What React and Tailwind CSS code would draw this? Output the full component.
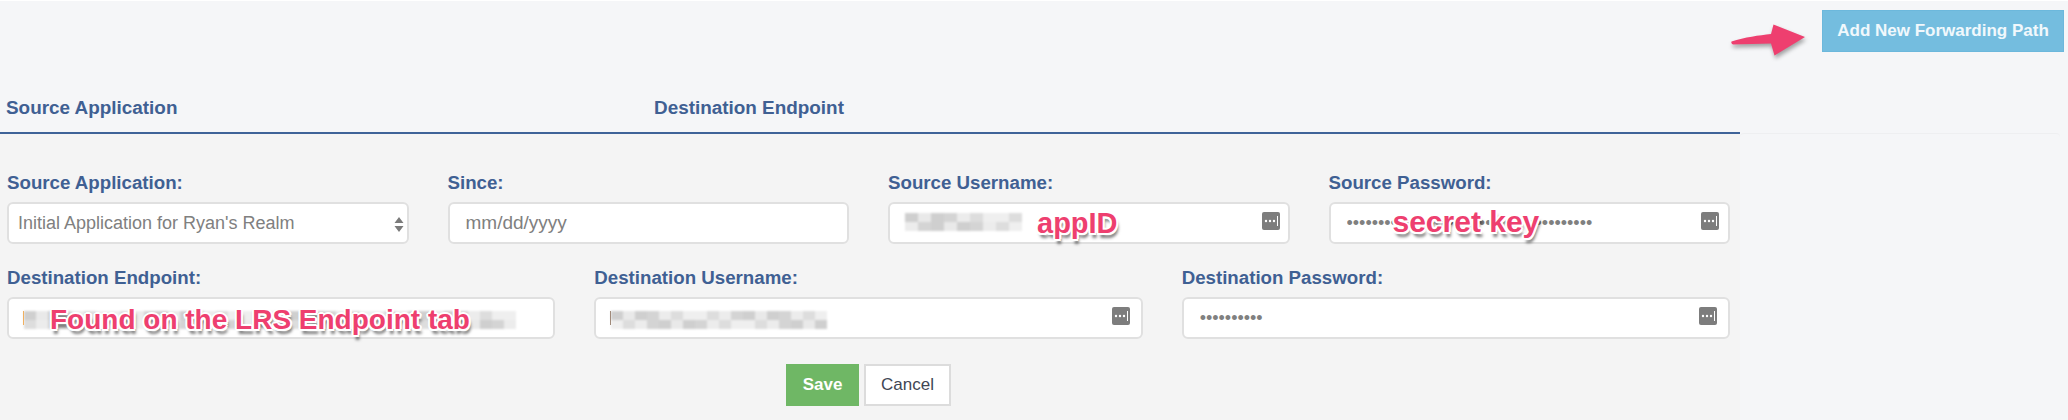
const labelClass = "block h-5 mb-[9px] text-[18.7px] leading-5 font-bold text-[#3f6093] whitespace-nowrap";
const inputClass = "w-full h-[42px] px-[16px] bg-white border-2 border-[#e0e0e0] rounded-[6px] text-[18px] text-[#808080] placeholder:text-[#808080] outline-none";
const noteClass = "absolute leading-8 font-bold text-[#ee3f6f] whitespace-nowrap [text-shadow:2px_0_#fff,-2px_0_#fff,0_2px_#fff,0_-2px_#fff,1.5px_1.5px_#fff,-1.5px_1.5px_#fff,1.5px_-1.5px_#fff,-1.5px_-1.5px_#fff,2px_5px_3px_#00000080]";

const KeyIcon = ({ right }) => (
  <svg
    className="absolute top-[10px]"
    style={{ right }}
    width="18"
    height="18"
    viewBox="0 0 18 18"
  >
    <rect width="18" height="18" rx="2" fill="#7d7d7d" />
    <circle cx="4" cy="9" r="1.2" fill="#fff" />
    <circle cx="8" cy="9" r="1.2" fill="#fff" />
    <circle cx="12" cy="9" r="1.2" fill="#fff" />
    <rect x="15" y="4" width="1" height="10" fill="#fff" />
  </svg>
);

// pixelated smudge over the private values
const shades = ["#d4d4d4", "#e2e2e2", "#cfcfcf", "#dddddd", "#ececec", "#d2d2d2", "#e6e6e6", "#d9d9d9", "#efefef", "#cbcbcb", "#e9e9e9"];

const Mosaic = ({ left, top, cols, rows = 2, cell = 12, height = 9 }) => (
  <svg
    className="absolute blur-[1px]"
    style={{ left, top }}
    width={cols * cell}
    height={rows * height}
  >
    {Array.from({ length: cols * rows }).map((_, i) => (
      <rect
        key={i}
        x={(i % cols) * cell}
        y={Math.floor(i / cols) * height}
        width={cell}
        height={height}
        fill={shades[(i * i * 3 + i * 5 + 2) % shades.length]}
      />
    ))}
  </svg>
);

const Field = ({ label, children, className = "" }) => (
  <div className={`flex-1 min-w-0 ${className}`}>
    <label className={labelClass}>{label}</label>
    <div className="relative h-[42px]">{children}</div>
  </div>
);

const Arrow = () => (
  <svg
    className="mt-[14px] mr-[15px] drop-shadow-[1px_3px_2px_rgba(0,0,0,0.35)]"
    width="76"
    height="33"
    viewBox="0 0 76 33"
  >
    <path
      d="M0.5 17.5 C14 13 28 11.5 40 10 L42.5 0.5 L74 13 L43.5 31.5 L40 19.5 C28 19.5 14 20.5 2 20.5 C0.5 20.2 0 18.5 0.5 17.5 Z"
      fill="#ee3f6f"
    />
  </svg>
);

const App = () => {
  return (
    <div className="h-[420px] overflow-hidden bg-[#f5f6f8] border-t border-white font-['Liberation_Sans',Arial,sans-serif]">
      {/* Top action */}
      <div className="flex justify-end items-start h-[52px] pt-[9px] pr-[4px]">
        <Arrow />
        <button className="w-[242px] h-[42px] bg-[#74bddf] border border-[#6cb8dc] text-white/90 text-[17px] font-bold">
          Add New Forwarding Path
        </button>
      </div>

      <div className="flex">
        <div className="w-[1740px] shrink-0">
          {/* Tabs */}
          <div className="flex items-end h-[81px] pb-[14px] pl-[6px] border-b-2 border-[#3f6398] text-[18.9px] leading-5 font-bold text-[#3f6093]">
            <div className="w-[648px]">Source Application</div>
            <div>Destination Endpoint</div>
          </div>

          {/* Form */}
          <div className="h-[286px] bg-[#f4f4f4] pt-[39px] pl-[7px] pr-[10px]">
            <div className="flex gap-[39px]">
              <Field label="Source Application:">
                <select className={`${inputClass} appearance-none pl-[9px]`} defaultValue="initial">
                  <option value="initial">Initial Application for Ryan's Realm</option>
                </select>
                <svg className="absolute right-[5px] top-[15px]" width="10" height="15" viewBox="0 0 10 15">
                  <path d="M5 0 L9.5 6 H0.5 Z M5 15 L9.5 9 H0.5 Z" fill="#7b7b7b" />
                </svg>
              </Field>
              <Field label="Since:">
                <input className={`${inputClass} text-[19px] placeholder:text-[19px]`} placeholder="mm/dd/yyyy" />
              </Field>
              <Field label="Source Username:">
                <input className={inputClass} readOnly />
                <Mosaic left={17} top={11} cols={9} cell={13} />
                <KeyIcon right={10} />
                <span className={`${noteClass} text-[29px] left-[149px] top-[5px]`}>appID</span>
              </Field>
              <Field label="Source Password:">
                <input className={inputClass} type="password" readOnly defaultValue="aaaaaaaaaaaaaaaaaaaaaaaaaaaaaaaaaaaaaaa" />
                <KeyIcon right={11} />
                <span className={`${noteClass} text-[30px] left-[64px] top-[4px]`}>secret key</span>
              </Field>
            </div>

            <div className="flex gap-[39px] mt-[24px]">
              <Field label="Destination Endpoint:">
                <input className={inputClass} readOnly />
                <Mosaic left={17} top={14} cols={41} />
                <span className="absolute left-[16px] top-[14px] w-px h-[14px] bg-[#f0b060]"></span>
                <span className={`${noteClass} text-[28px] left-[43px] top-[7px]`}>Found on the LRS Endpoint tab</span>
              </Field>
              <Field label="Destination Username:">
                <input className={inputClass} readOnly />
                <Mosaic left={17} top={14} cols={18} />
                <span className="absolute left-[16px] top-[14px] w-px h-[14px] bg-[#a08a7a]"></span>
                <KeyIcon right={13} />
              </Field>
              <Field label="Destination Password:">
                <input className={inputClass} type="password" readOnly defaultValue="aaaaaaaaaa" />
                <KeyIcon right={13} />
              </Field>
            </div>

            <div className="flex justify-center gap-[5px] mt-[25px]">
              <button className="w-[73px] h-[42px] bg-[#6fb765] text-white text-[17px] font-bold">Save</button>
              <button className="w-[87px] h-[42px] bg-white border-2 border-[#dcdcdc] text-[#3f4654] text-[17px]">Cancel</button>
            </div>
          </div>
        </div>

        {/* Empty side column */}
        <div className="w-[320px] h-[20px] mt-[80px] border-t border-[#eeeff1] rounded-t-[4px]"></div>
      </div>
    </div>
  );
};

export default App;
